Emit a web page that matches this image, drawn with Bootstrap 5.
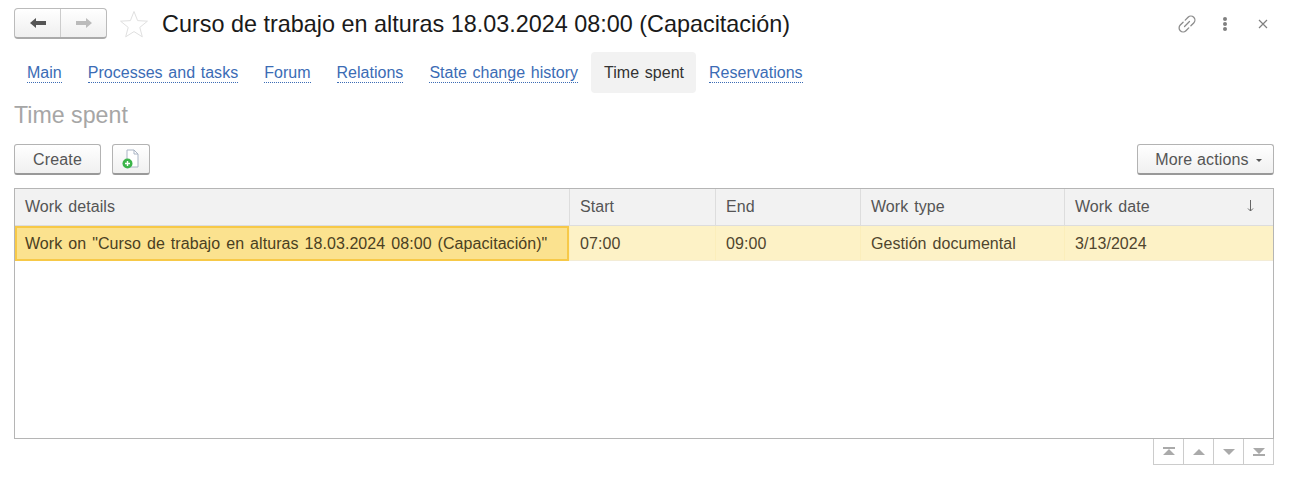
<!DOCTYPE html>
<html lang="en">
<head>
<meta charset="utf-8">
<title>Time spent</title>
<link href="https://cdn.jsdelivr.net/npm/bootstrap@5.3.0/dist/css/bootstrap.min.css" rel="stylesheet">
<style>
html,body{height:479px;overflow:hidden}
body{font-family:"Liberation Sans",Arial,sans-serif;font-size:16px;letter-spacing:.06px;word-spacing:1.5px;color:#333;background:#fff;padding:0 18px 0 14px}
.top-bar{height:52px}
.nav-group{width:93px;height:31px;border:1px solid #bbb;border-bottom:2px solid #aaa;border-radius:4px;background:linear-gradient(#fff,#efefef)}
.nav-half{flex:1 1 0;height:100%}
.nav-half+.nav-half{border-left:1px solid #ccc}
.page-title{font-size:23.4px;letter-spacing:0;word-spacing:0;color:#1a1a1a;margin:0 0 0 13px;line-height:30px;font-weight:400}
.star{margin-left:12px}
.tabs-row{height:49px}
.tab-link{color:#3b6cb5;font-size:16px;letter-spacing:.02px;word-spacing:1.2px;padding:0 13px;line-height:42px;height:41px;display:block;text-decoration:none}
.tab-link span{border-bottom:1px dotted #3b6cb5;line-height:1.1;display:inline-block}
.tab-on{background:#f2f2f2;border-radius:4px;color:#333;padding:0 12px 0 13px}
.sect-title{font-size:23.2px;letter-spacing:0;word-spacing:0;color:#a6a6a6;font-weight:400;line-height:28px;margin:0;height:43px}
.tool-row{height:44px}
.btn-flat{height:31px;border:1px solid #b3b3b3;border-bottom:2px solid #999;border-radius:3px;background:linear-gradient(#fff,#f0f0f0);color:#555;font-size:16px;letter-spacing:.15px;padding:1px 0 0;display:flex;align-items:center;justify-content:center}
.btn-create{width:87px}
.btn-add{width:38px;margin-left:11px;padding:0}
.btn-more{width:137px;padding-left:6px}
.caret-mark{display:inline-block;width:0;height:0;border-left:3px solid transparent;border-right:3px solid transparent;border-top:3px solid #555;margin-left:7px;margin-top:2px}
.grid-box{height:251px;border:1px solid #b5b5b5;width:1260px}
.grid-tbl{table-layout:fixed;width:100%;border-collapse:separate;border-spacing:0;margin:0}
.grid-tbl th{height:37px;background:#f2f2f2;font-weight:400;color:#555;padding:0 10px 1px;border-bottom:1px solid #ddd;border-left:1px solid #ddd;font-size:16px}
.grid-tbl td{height:35px;background:#fdf2c6;color:#4f452e;padding:1px 10px 0;border-left:1px solid #fbeebb;border-bottom:1px solid #f3ecd6;font-size:16px;white-space:nowrap}
.grid-tbl th:first-child,.grid-tbl td:first-child{border-left:0}
.grid-tbl td.cell-cur{background:#fbe28f;border:2px solid #f7c948;padding:1px 8px 0;color:#4a4022}
.sort-arrow{float:right;margin:5px 9px 0 0;display:block}
.pager-row{width:1260px}
.pager{display:flex;border:1px solid #ccc;border-top:0;height:26px;width:121px}
.pager-cell{flex:1 1 0;display:flex;align-items:center;justify-content:center}
.pager-cell+.pager-cell{border-left:1px solid #ccc}
.head-tools{height:31px;margin-right:6px}
.ic-dots{margin-left:24px}
.ic-close{margin-left:30px}
</style>
</head>
<body>
<div class="top-bar d-flex align-items-start">
  <div class="d-flex align-items-center mt-2">
    <div class="nav-group d-flex">
      <div class="nav-half d-flex align-items-center justify-content-center">
        <svg width="18" height="12" viewBox="0 0 18 12"><path d="M1 6 7 1v3h10v4H7v3z" fill="#555"/></svg>
      </div>
      <div class="nav-half d-flex align-items-center justify-content-center">
        <svg width="18" height="12" viewBox="0 0 18 12"><path d="M17 6 11 1v3H1v4h10v3z" fill="#bbb"/></svg>
      </div>
    </div>
    <svg class="star" width="30" height="28" viewBox="0 0 30 28"><path d="M15 1.500 18.600 10.600 28.400 11.200 20.800 17.400 23.300 26.800 15 21.600 6.700 26.800 9.200 17.400 1.600 11.200 11.400 10.600z" fill="none" stroke="#e0e0e0" stroke-width="1"/></svg>
    <h1 class="page-title">Curso de trabajo en alturas 18.03.2024 08:00 (Capacitación)</h1>
  </div>
  <div class="head-tools ms-auto d-flex align-items-center mt-2">
    <svg width="22" height="22" viewBox="0 0 22 22" fill="none" stroke="#8c8c8c" stroke-width="1.3" stroke-linecap="round"><g transform="rotate(-45 11 11)"><path d="M9.500 7H5.500a4 4 0 0 0 0 8H9.500"/><path d="M12.500 7H16.500a4 4 0 0 1 0 8H12.500"/><path d="M7.500 11H14.500"/></g></svg>
    <svg class="ic-dots" width="6" height="16" viewBox="0 0 6 16" fill="#808080"><circle cx="3" cy="3" r="2"/><circle cx="3" cy="8" r="2"/><circle cx="3" cy="13" r="2"/></svg>
    <svg class="ic-close" width="10" height="10" viewBox="0 0 10 10" stroke="#808080" stroke-width="1.2"><path d="M1 1 9 9M9 1 1 9"/></svg>
  </div>
</div>
<div class="tabs-row d-flex align-items-start">
  <a class="tab-link" href="#"><span>Main</span></a>
  <a class="tab-link" href="#"><span>Processes and tasks</span></a>
  <a class="tab-link" href="#"><span>Forum</span></a>
  <a class="tab-link" href="#"><span>Relations</span></a>
  <a class="tab-link" href="#"><span>State change history</span></a>
  <a class="tab-link tab-on" href="#">Time spent</a>
  <a class="tab-link" href="#"><span>Reservations</span></a>
</div>
<h2 class="sect-title">Time spent</h2>
<div class="tool-row d-flex align-items-start">
  <button class="btn-flat btn-create" type="button">Create</button>
  <button class="btn-flat btn-add" type="button" aria-label="Add">
    <svg width="20" height="22" viewBox="0 0 20 22"><path d="M6 2h7l4 4v13H6z" fill="#fff" stroke="#a9b4c4"/><path d="M13 2v4h4" fill="none" stroke="#a9b4c4"/><circle cx="6.500" cy="15.500" r="5" fill="#3bb54a"/><path d="M4 15.500h5M6.500 13v5" stroke="#fff" stroke-width="1.400"/></svg>
  </button>
  <button class="btn-flat btn-more ms-auto" type="button">More actions<span class="caret-mark"></span></button>
</div>
<div class="grid-box">
  <table class="grid-tbl">
    <colgroup><col style="width:554px"><col style="width:146px"><col style="width:145px"><col style="width:204px"><col></colgroup>
    <thead><tr><th>Work details</th><th>Start</th><th>End</th><th>Work type</th><th>Work date<svg class="sort-arrow" width="7" height="12" viewBox="0 0 7 12" fill="none" stroke="#666" stroke-width="1"><path d="M3.500 0v11M1 8.500 3.500 11 6 8.500"/></svg></th></tr></thead>
    <tbody><tr><td class="cell-cur">Work on "Curso de trabajo en alturas 18.03.2024 08:00 (Capacitación)"</td><td>07:00</td><td>09:00</td><td>Gestión documental</td><td>3/13/2024</td></tr></tbody>
  </table>
</div>
<div class="pager-row d-flex justify-content-end">
  <div class="pager">
    <div class="pager-cell"><svg width="14" height="9" viewBox="0 0 14 9" fill="#aaa"><path d="M1 0h12v2H1zM7 2l6 6H1z"/></svg></div>
    <div class="pager-cell"><svg width="14" height="8" viewBox="0 0 14 8" fill="#aaa"><path d="M7 1l6 6H1z"/></svg></div>
    <div class="pager-cell"><svg width="14" height="8" viewBox="0 0 14 8" fill="#aaa"><path d="M7 7l6-6H1z"/></svg></div>
    <div class="pager-cell"><svg width="14" height="9" viewBox="0 0 14 9" fill="#aaa"><path d="M1 7h12v2H1zM7 7l6-6H1z"/></svg></div>
  </div>
</div>
<script src="https://cdn.jsdelivr.net/npm/bootstrap@5.3.0/dist/js/bootstrap.bundle.min.js"></script>
</body>
</html>
